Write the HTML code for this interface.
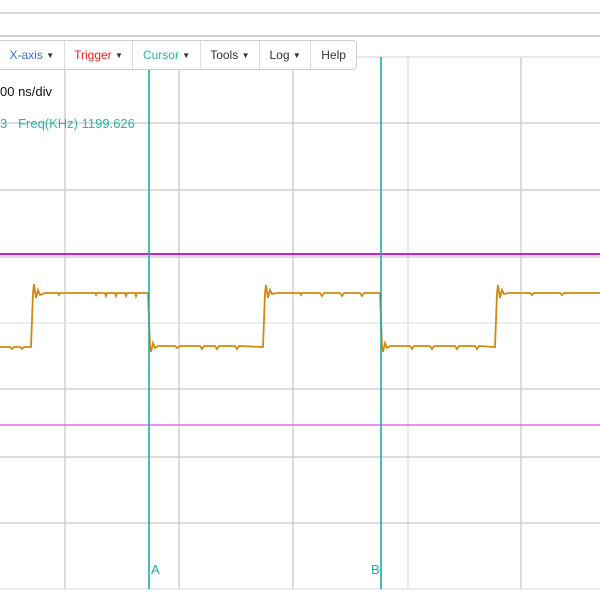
<!DOCTYPE html>
<html><head><style>
body{margin:0;width:600px;height:600px;overflow:hidden;background:#fff;font-family:"Liberation Sans",sans-serif}
.menu{position:absolute;left:0;top:40px;height:28px;display:flex;border:1px solid #ccc;border-left:none;border-radius:0 4px 4px 0;background:#fff;font-size:12px}
.menu div{padding:0 9.5px;line-height:28px;border-right:1px solid #ddd}
.menu div:last-child{border-right:none;padding:0 10px}
.c{font-size:8px;vertical-align:1px}
</style></head><body>
<svg width="600" height="600" style="position:absolute;left:0;top:0">
<line x1="0" y1="13" x2="600" y2="13" stroke="#ccc" stroke-width="1.5"/>
<line x1="0" y1="36" x2="600" y2="36" stroke="#ccc" stroke-width="2"/>
<g stroke="#d0d0d0" stroke-width="1.5">
<line x1="65" y1="68" x2="65" y2="589"/><line x1="179" y1="68" x2="179" y2="589"/>
<line x1="293" y1="57" x2="293" y2="589"/><line x1="408" y1="57" x2="408" y2="589" stroke="#e2e2e2"/>
<line x1="521" y1="57" x2="521" y2="589"/>
<line x1="355" y1="57" x2="600" y2="57" stroke="#e0e0e0"/>
<line x1="0" y1="123" x2="600" y2="123"/><line x1="0" y1="190" x2="600" y2="190"/>
<line x1="0" y1="257" x2="600" y2="257"/><line x1="0" y1="323" x2="600" y2="323" stroke="#e6e6e6"/>
<line x1="0" y1="389" x2="600" y2="389"/><line x1="0" y1="457" x2="600" y2="457"/>
<line x1="0" y1="523" x2="600" y2="523"/><line x1="0" y1="589" x2="600" y2="589" stroke="#e6e6e6"/>
</g>
<line x1="0" y1="254" x2="600" y2="254" stroke="#e010e0" stroke-width="2"/>
<line x1="0" y1="425" x2="600" y2="425" stroke="#f060f0" stroke-width="1.5"/>
<polyline fill="none" stroke="#d08a10" stroke-width="1.8" points="0,347 10,347 12,349 14,347 20,347 22,349 24,347 31,347 33,293 34,284 36,298 38,290 40,295 45,293 58,293 59,295 60,293 95,293 96,295 97,293 105,293 106,296 107,293 115,293 116,296 117,293 125,293 126,296 127,293 135,293 136,296 137,293 148,293 150,346 151,352 153,343 155,348 158,346 175,346 177,348 180,346 200,346 202,349 204,346 215,346 217,349 219,346 235,346 237,349 239,346 263,347 265,293 266,285 268,298 270,290 272,294 277,293 300,293 301,295 302,293 320,293 322,296 324,293 340,293 342,296 344,293 360,293 362,296 364,293 380,293 382,346 383,352 385,343 387,348 390,346 410,346 412,349 414,346 430,346 432,349 434,346 455,346 457,349 459,346 475,346 477,349 479,346 495,347 497,293 498,285 500,298 502,290 504,294 509,293 530,293 532,295 534,293 560,293 562,295 564,293 600,293"/>
<line x1="149" y1="57" x2="149" y2="589" stroke="#1aaea4" stroke-width="1.6"/>
<line x1="381" y1="57" x2="381" y2="589" stroke="#1aaea4" stroke-width="1.6"/>
<text x="151" y="574" fill="#1aaea4" font-size="13" font-family="Liberation Sans">A</text>
<text x="371" y="574" fill="#1aaea4" font-size="13" font-family="Liberation Sans">B</text>
<text x="0" y="96" fill="#111" font-size="13" font-family="Liberation Sans">00 ns/div</text>
<text x="0" y="128" fill="#2bb5a8" font-size="13" font-family="Liberation Sans" xml:space="preserve">3   Freq(KHz) 1199.626</text>
</svg>
<div class="menu">
<div style="color:#3a6fd8">X-axis <span class="c" style="color:#333">▼</span></div>
<div style="color:#f02020">Trigger <span class="c" style="color:#333">▼</span></div>
<div style="color:#2bb5a8">Cursor <span class="c" style="color:#333">▼</span></div>
<div style="color:#333">Tools <span class="c">▼</span></div>
<div style="color:#333">Log <span class="c">▼</span></div>
<div style="color:#333">Help</div>
</div>
</body></html>
